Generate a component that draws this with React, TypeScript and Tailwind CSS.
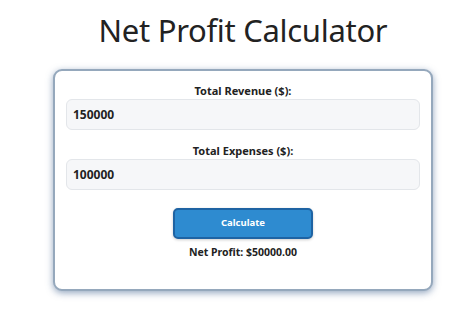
export default function App() {
  return (
    <div className="w-[474px] h-[318px] bg-white font-['Noto_Sans',sans-serif] text-[#222]">
      <h1 className="ml-[53px] w-[380px] pt-[11px] h-[69px] text-center text-[31px] leading-[38px] tracking-[-0.3px] font-normal text-[#222]">
        Net Profit Calculator
      </h1>
      <div className="ml-[53px] w-[380px] h-[222px] rounded-[9px] border-2 border-[#95a8bc] bg-white shadow-[0_2px_7px_rgba(60,95,140,0.55)] px-[11px] pt-[13px]">
        <label className="block text-center text-[11px] leading-[14px] font-bold">Total Revenue ($):</label>
        <div className="mt-[1px] h-[31px] rounded-[6px] border border-[#e3e6ea] bg-[#f6f7f9] px-[6px] flex items-center text-[12px] font-bold">
          150000
        </div>
        <label className="block mt-[14px] text-center text-[11px] leading-[14px] font-bold">Total Expenses ($):</label>
        <div className="mt-[1px] h-[31px] rounded-[6px] border border-[#e3e6ea] bg-[#f6f7f9] px-[6px] flex items-center text-[12px] font-bold">
          100000
        </div>
        <div className="mt-[18px] flex justify-center">
          <button className="w-[140px] h-[31px] rounded-[5px] border-2 border-[#1e63a3] bg-[#2e8bd0] text-white text-[9.5px] font-bold shadow-[0_1px_3px_rgba(0,0,0,0.2)]">
            Calculate
          </button>
        </div>
        <p className="mt-[6px] text-center text-[10.5px] leading-[14px] font-bold">Net Profit: $50000.00</p>
      </div>
    </div>
  );
}
